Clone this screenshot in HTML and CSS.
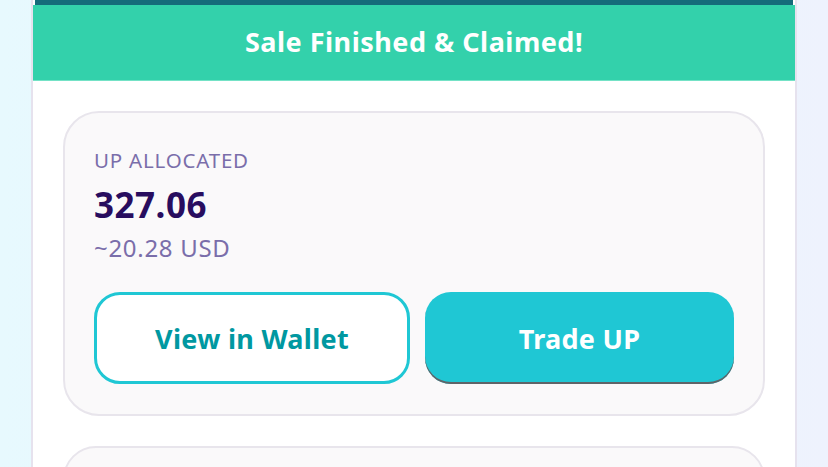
FILE: index.html
```html
<!DOCTYPE html>
<html lang="en">
<head>
<meta charset="utf-8">
<link rel="stylesheet" href="styles.css">
<title>IFO</title>
</head>
<body>
<div class="page">
  <div class="card">
    <div class="topbar"></div>
    <div class="banner">Sale Finished &amp; Claimed!</div>
    <div class="body">
      <div class="panel">
        <div class="label">UP ALLOCATED</div>
        <div class="amount">327.06</div>
        <div class="usd">~20.28 USD</div>
        <div class="actions">
          <button class="btn btn-outline">View in Wallet</button>
          <button class="btn btn-primary">Trade UP</button>
        </div>
      </div>
      <div class="panel panel-next"></div>
    </div>
  </div>
</div>
</body>
</html>
```
FILE: styles.css
```css
* { box-sizing: border-box; }
html, body { margin: 0; padding: 0; }
body {
  width: 828px;
  height: 467px;
  overflow: hidden;
  font-family: "Noto Sans", "Open Sans", sans-serif;
  background: linear-gradient(90deg, #e7f9fe 0%, #eaf6fd 50%, #eef2fd 100%);
}
.page { padding: 0 31px; }
.card {
  background: #ffffff;
  border-left: 2px solid #e6e2ee;
  border-right: 2px solid #e6e2ee;
  height: 467px;
  overflow: hidden;
}
.topbar {
  height: 5px;
  margin: 0 2px;
  background: #156b7a;
}
.banner {
  height: 76px;
  background: #33d1ab;
  border-bottom: 1px solid #74e2c6;
  color: #ffffff;
  font-weight: 700;
  font-size: 27px;
  letter-spacing: 0.5px;
  display: flex;
  align-items: center;
  justify-content: center;
  padding-bottom: 2px;
}
.body { padding: 30px 30px 0 30px; }
.panel {
  background: #faf9fa;
  border: 2px solid #e8e5ec;
  border-radius: 36px;
  padding: 32px 29px 30px 29px;
}
.label {
  color: #7a6eaa;
  font-size: 20.5px;
  line-height: 30px;
  font-weight: 400;
  letter-spacing: 0.8px;
}
.amount {
  color: #280d5f;
  font-size: 35px;
  font-weight: 700;
  line-height: 46px;
  margin-top: 7px;
  letter-spacing: 0.5px;
}
.usd {
  color: #7a6eaa;
  font-size: 24px;
  line-height: 34px;
  margin-top: 3px;
  letter-spacing: 0.7px;
}
.actions {
  display: grid;
  grid-template-columns: 316px 309px;
  gap: 15px;
  margin-top: 27px;
}
.btn {
  height: 92px;
  border-radius: 26px;
  font-family: inherit;
  font-weight: 700;
  font-size: 27px;
  letter-spacing: 0.3px;
  cursor: pointer;
}
.btn-outline {
  background: #ffffff;
  border: 3px solid #1fc7d4;
  color: #0098a1;
}
.btn-primary {
  background: #1fc7d4;
  border: none;
  color: #ffffff;
  box-shadow: inset 0 -2px 0 0 #5f6468;
}
.panel-next {
  margin-top: 30px;
  height: 60px;
}
```
